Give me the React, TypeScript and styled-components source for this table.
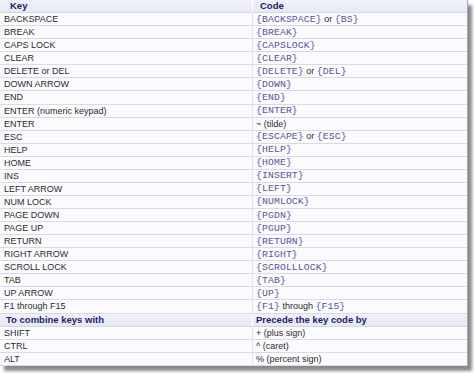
import React from "react";
import styled, { createGlobalStyle } from "styled-components";

const GlobalStyle = createGlobalStyle`
  html, body {
    margin: 0;
    padding: 0;
    background: #ffffff;
  }
  body {
    font-family: "Liberation Sans", Arial, sans-serif;
  }
`;

type Part = string | { code: string };

interface Row {
  key: string;
  value: Part[];
}

const keyRows: Row[] = [
  { key: "BACKSPACE", value: [{ code: "{BACKSPACE}" }, " or ", { code: "{BS}" }] },
  { key: "BREAK", value: [{ code: "{BREAK}" }] },
  { key: "CAPS LOCK", value: [{ code: "{CAPSLOCK}" }] },
  { key: "CLEAR", value: [{ code: "{CLEAR}" }] },
  { key: "DELETE or DEL", value: [{ code: "{DELETE}" }, " or ", { code: "{DEL}" }] },
  { key: "DOWN ARROW", value: [{ code: "{DOWN}" }] },
  { key: "END", value: [{ code: "{END}" }] },
  { key: "ENTER (numeric keypad)", value: [{ code: "{ENTER}" }] },
  { key: "ENTER", value: ["~ (tilde)"] },
  { key: "ESC", value: [{ code: "{ESCAPE}" }, " or ", { code: "{ESC}" }] },
  { key: "HELP", value: [{ code: "{HELP}" }] },
  { key: "HOME", value: [{ code: "{HOME}" }] },
  { key: "INS", value: [{ code: "{INSERT}" }] },
  { key: "LEFT ARROW", value: [{ code: "{LEFT}" }] },
  { key: "NUM LOCK", value: [{ code: "{NUMLOCK}" }] },
  { key: "PAGE DOWN", value: [{ code: "{PGDN}" }] },
  { key: "PAGE UP", value: [{ code: "{PGUP}" }] },
  { key: "RETURN", value: [{ code: "{RETURN}" }] },
  { key: "RIGHT ARROW", value: [{ code: "{RIGHT}" }] },
  { key: "SCROLL LOCK", value: [{ code: "{SCROLLLOCK}" }] },
  { key: "TAB", value: [{ code: "{TAB}" }] },
  { key: "UP ARROW", value: [{ code: "{UP}" }] },
  { key: "F1 through F15", value: [{ code: "{F1}" }, " through ", { code: "{F15}" }] },
];

const comboRows: Row[] = [
  { key: "SHIFT", value: ["+ (plus sign)"] },
  { key: "CTRL", value: ["^ (caret)"] },
  { key: "ALT", value: ["% (percent sign)"] },
];

function Value({ parts }: { parts: Part[] }) {
  return (
    <span>
      {parts.map((p, i) =>
        typeof p === "string" ? p : <Code key={i}>{p.code}</Code>
      )}
    </span>
  );
}

export default function App() {
  return (
    <>
      <GlobalStyle />
      <Page>
        <Table>
          <HeadCell $indent={10}>Key</HeadCell>
          <HeadCell $indent={7} $divider>Code</HeadCell>
          {keyRows.map((r) => (
            <React.Fragment key={r.key + r.value.length}>
              <Cell>{r.key}</Cell>
              <Cell $divider>
                <Value parts={r.value} />
              </Cell>
            </React.Fragment>
          ))}
          <HeadCell $indent={6}>To combine keys with</HeadCell>
          <HeadCell $indent={3} $divider>Precede the key code by</HeadCell>
          {comboRows.map((r) => (
            <React.Fragment key={r.key}>
              <Cell>{r.key}</Cell>
              <Cell $divider>
                <Value parts={r.value} />
              </Cell>
            </React.Fragment>
          ))}
        </Table>
      </Page>
    </>
  );
}

const Page = styled.div`
  width: 474px;
  height: 373px;
  overflow: hidden;
`;

const Table = styled.div`
  width: 467px;
  display: grid;
  grid-template-columns: 252px 1fr;
  grid-auto-rows: 13.07px;
  background: #fbfbfe;
  border-right: 1px solid #a8a8b8;
  box-shadow: 4px 5px 3px #8a8a8a;
`;

const HeadCell = styled.div<{ $indent: number; $divider?: boolean }>`
  display: flex;
  align-items: center;
  padding-left: ${(p) => p.$indent}px;
  background: linear-gradient(#f0f1f9, #e6e8f3);
  border-bottom: 1px solid #d4d6e4;
  border-left: ${(p) => (p.$divider ? "1px solid #ffffff" : "none")};
  color: #1c1c6b;
  font-weight: bold;
  font-size: 9.5px;
  line-height: 12px;
  white-space: pre;
  box-sizing: border-box;
`;

const Cell = styled.div<{ $divider?: boolean }>`
  display: flex;
  align-items: center;
  padding-left: ${(p) => (p.$divider ? 3 : 4)}px;
  border-bottom: 1px solid #d8dae6;
  border-left: ${(p) => (p.$divider ? "1px solid #e2e3ee" : "none")};
  color: #2b2b2b;
  font-size: 9px;
  line-height: 12px;
  white-space: pre;
  box-sizing: border-box;
`;

const Code = styled.span`
  font-family: "Liberation Mono", "Courier New", monospace;
  font-size: 9.8px;
  color: #56569a;
  letter-spacing: 0.1px;
`;
